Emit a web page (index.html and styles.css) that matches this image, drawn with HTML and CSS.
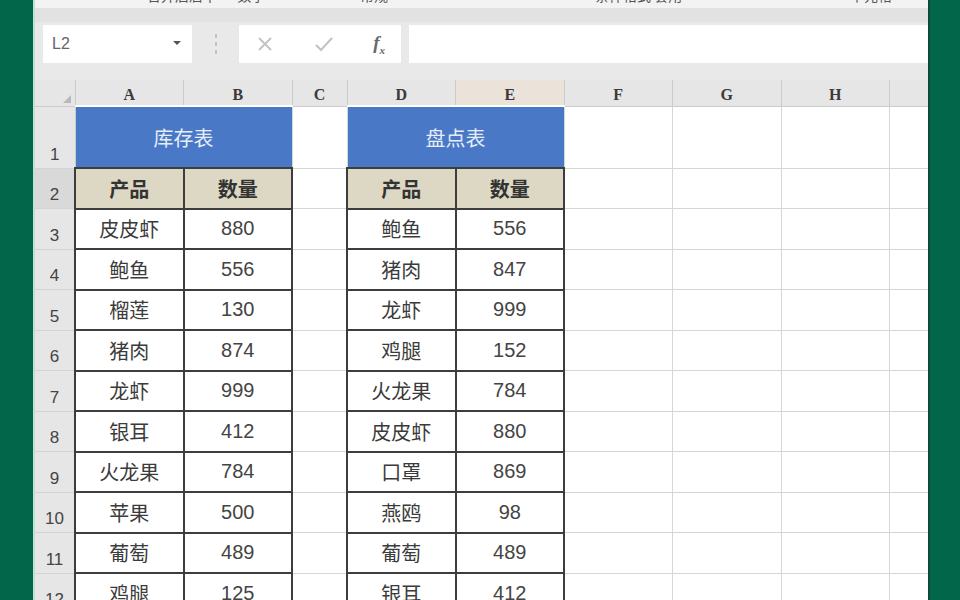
FILE: index.html
```html
<!DOCTYPE html>
<html lang="zh-CN">
<head>
<meta charset="utf-8">
<link rel="stylesheet" href="styles.css">
</head>
<body>
<div class="frame">
  <div class="edge edge-left"></div>
  <div class="app">
    <div class="ribbon-tail">
      <span class="rt rt1">合并后居中 · 数字</span>
      <span class="rt rt2">常规</span>
      <span class="rt rt3">·</span>
      <span class="rt rt4">条件格式 套用</span>
      <span class="rt rt5">·</span>
      <span class="rt rt6">单元格</span>
    </div>
    <div class="band"></div>
    <div class="fbar">
      <div class="namebox"><span class="nb-text">L2</span><svg class="nb-arrow" width="10" height="6" viewBox="0 0 10 6"><path d="M1 1h8L5 5z" fill="#555"/></svg></div>
      <div class="sep"><span></span><span></span><span></span></div>
      <div class="fnbox">
        <svg class="fx-ico" width="20" height="20" viewBox="0 0 20 20"><path d="M4 4L16 16M16 4L4 16" stroke="#c4c4c4" stroke-width="2" fill="none"/></svg>
        <svg class="fx-ico" width="22" height="20" viewBox="0 0 22 20"><path d="M3 11l5 5L19 4" stroke="#c4c4c4" stroke-width="2.2" fill="none"/></svg>
        <span class="fx-text">f<sub>x</sub></span>
      </div>
      <div class="finput"></div>
    </div>
    <table class="sheet">
      <colgroup>
        <col class="c-rh"><col class="c-w"><col class="c-w"><col class="c-n"><col class="c-w"><col class="c-w"><col class="c-w"><col class="c-w"><col class="c-w"><col class="c-rest">
      </colgroup>
      <tr class="hdr">
        <th class="corner"><svg width="10" height="10" viewBox="0 0 10 10"><path d="M9 1V9H1z" fill="#b9b9b9"/></svg></th>
        <th>A</th><th>B</th><th>C</th><th>D</th><th class="hl">E</th><th>F</th><th>G</th><th>H</th><th></th>
      </tr>
      <tr class="r1">
        <th class="rh">1</th>
        <td class="title" colspan="2">库存表</td><td></td>
        <td class="title" colspan="2">盘点表</td><td></td><td></td><td></td><td></td>
      </tr>
      <tr class="r">
        <th class="rh sel">2</th>
        <td class="b head">产品</td><td class="b head">数量</td><td></td>
        <td class="b head">产品</td><td class="b head">数量</td><td></td><td></td><td></td><td></td>
      </tr>
      <tr class="r"><th class="rh">3</th><td class="b">皮皮虾</td><td class="b num">880</td><td></td><td class="b">鲍鱼</td><td class="b num">556</td><td></td><td></td><td></td><td></td></tr>
      <tr class="r"><th class="rh">4</th><td class="b">鲍鱼</td><td class="b num">556</td><td></td><td class="b">猪肉</td><td class="b num">847</td><td></td><td></td><td></td><td></td></tr>
      <tr class="r"><th class="rh">5</th><td class="b">榴莲</td><td class="b num">130</td><td></td><td class="b">龙虾</td><td class="b num">999</td><td></td><td></td><td></td><td></td></tr>
      <tr class="r"><th class="rh">6</th><td class="b">猪肉</td><td class="b num">874</td><td></td><td class="b">鸡腿</td><td class="b num">152</td><td></td><td></td><td></td><td></td></tr>
      <tr class="r"><th class="rh">7</th><td class="b">龙虾</td><td class="b num">999</td><td></td><td class="b">火龙果</td><td class="b num">784</td><td></td><td></td><td></td><td></td></tr>
      <tr class="r"><th class="rh">8</th><td class="b">银耳</td><td class="b num">412</td><td></td><td class="b">皮皮虾</td><td class="b num">880</td><td></td><td></td><td></td><td></td></tr>
      <tr class="r"><th class="rh">9</th><td class="b">火龙果</td><td class="b num">784</td><td></td><td class="b">口罩</td><td class="b num">869</td><td></td><td></td><td></td><td></td></tr>
      <tr class="r"><th class="rh">10</th><td class="b">苹果</td><td class="b num">500</td><td></td><td class="b">燕鸥</td><td class="b num">98</td><td></td><td></td><td></td><td></td></tr>
      <tr class="r"><th class="rh">11</th><td class="b">葡萄</td><td class="b num">489</td><td></td><td class="b">葡萄</td><td class="b num">489</td><td></td><td></td><td></td><td></td></tr>
      <tr class="r"><th class="rh">12</th><td class="b">鸡腿</td><td class="b num">125</td><td></td><td class="b">银耳</td><td class="b num">412</td><td></td><td></td><td></td><td></td></tr>
    </table>
  </div>
  <div class="edge edge-right"></div>
</div>
</body>
</html>
```

FILE: styles.css
```css
html, body {
  margin: 0;
  padding: 0;
  width: 960px;
  height: 600px;
  overflow: hidden;
  background: #02664a;
}
.frame {
  display: flex;
  width: 960px;
  height: 600px;
}
.edge {
  background: #02664a;
  flex: none;
}
.edge-left {
  width: 33px;
  border-right: 2px solid #bfe3d3;
}
.edge-right {
  width: 30px;
  border-left: 2px solid #0d4a37;
}
.app {
  width: 893px;
  height: 600px;
  overflow: hidden;
  background: #ffffff;
  flex: none;
  display: flex;
  flex-direction: column;
}
.ribbon-tail {
  height: 8px;
  background: #f3f3f3;
  position: relative;
  overflow: hidden;
  font-family: "Noto Sans CJK SC", sans-serif;
  font-size: 14px;
  color: #555;
  flex: none;
}
.rt {
  position: absolute;
  top: -15px;
  white-space: nowrap;
}
.rt1 { left: 112px; }
.rt2 { left: 325px; }
.rt3 { left: 450px; }
.rt4 { left: 560px; }
.rt5 { left: 760px; }
.rt6 { left: 815px; }
.band {
  height: 14px;
  background: #e2e2e2;
  flex: none;
}
.fbar {
  height: 58px;
  box-sizing: border-box;
  padding: 3px 0 17px 8px;
  background: #e9e9e9;
  display: flex;
  align-items: stretch;
  gap: 8px;
  flex: none;
}
.namebox {
  width: 149px;
  background: #fff;
  display: flex;
  align-items: center;
  justify-content: space-between;
  padding: 0 10px 0 9px;
  box-sizing: border-box;
  font-family: "Liberation Sans", sans-serif;
  font-size: 16px;
  color: #666;
}
.nb-arrow { margin-top: -2px; }
.sep {
  width: 31px;
  display: flex;
  flex-direction: column;
  align-items: center;
  justify-content: center;
  gap: 4px;
}
.sep span {
  width: 2px;
  height: 4px;
  background: #c3c3c3;
}
.fnbox {
  width: 162px;
  background: #fff;
  display: flex;
  align-items: center;
  justify-content: space-between;
  padding: 0 16px 0 16px;
  box-sizing: border-box;
}
.fx-text {
  font-family: "Liberation Serif", serif;
  font-style: italic;
  font-weight: bold;
  font-size: 19px;
  color: #6a6a6a;
}
.fx-text sub {
  font-size: 11px;
}
.finput {
  flex: 1;
  background: #fff;
}
.sheet {
  border-collapse: collapse;
  table-layout: fixed;
  width: 893px;
  font-family: "Noto Sans CJK SC", sans-serif;
  color: #3b3b3b;
}
.c-rh { width: 40px; }
.c-w { width: 108.5px; }
.c-n { width: 55px; }
.c-rest { width: 39px; }
.hdr th {
  height: 26px;
  padding: 4px 0 0 0;
  box-sizing: border-box;
  background: #e6e6e6;
  border-right: 1px solid #cbcbcb;
  border-bottom: 1px solid #cbcbcb;
  font-family: "Liberation Serif", serif;
  font-weight: bold;
  font-size: 16px;
  color: #3a3a3a;
  vertical-align: middle;
}
.hdr th.hl { background: #ebe3da; }
.hdr th.corner {
  text-align: right;
  vertical-align: bottom;
  padding: 0;
}
.corner svg { margin: 0 3px 2px 0; display: inline-block; vertical-align: bottom; }
.rh {
  background: #e6e6e6;
  border-right: 1px solid #cbcbcb;
  border-bottom: 1px solid #d3d3d3;
  font-family: "Liberation Sans", sans-serif;
  font-weight: normal;
  font-size: 17px;
  color: #444;
  text-align: center;
  vertical-align: bottom;
  padding: 0 0 3px 0;
}
.rh.sel { background: #d9d9d9; }
td {
  border: 1px solid #d6d6d6;
  padding: 0;
  text-align: center;
  vertical-align: middle;
  font-size: 20px;
  white-space: nowrap;
  overflow: hidden;
}
.r1 td, .r1 th { height: 62px; box-sizing: border-box; }
.r td, .r th { height: 40.5px; box-sizing: border-box; }
td.title {
  background: #4878c6;
  color: #e6edf8;
  font-size: 20px;
  border-left: 1px solid #d6d6d6;
  border-top: 2px solid #ffffff;
}
td.b {
  border: 2px solid #3d3d3d;
}
td.head {
  background: #ddd8c3;
  font-weight: bold;
  color: #333;
}
td.num {
  font-family: "Liberation Sans", sans-serif;
  font-size: 20px;
  color: #444;
}
```
